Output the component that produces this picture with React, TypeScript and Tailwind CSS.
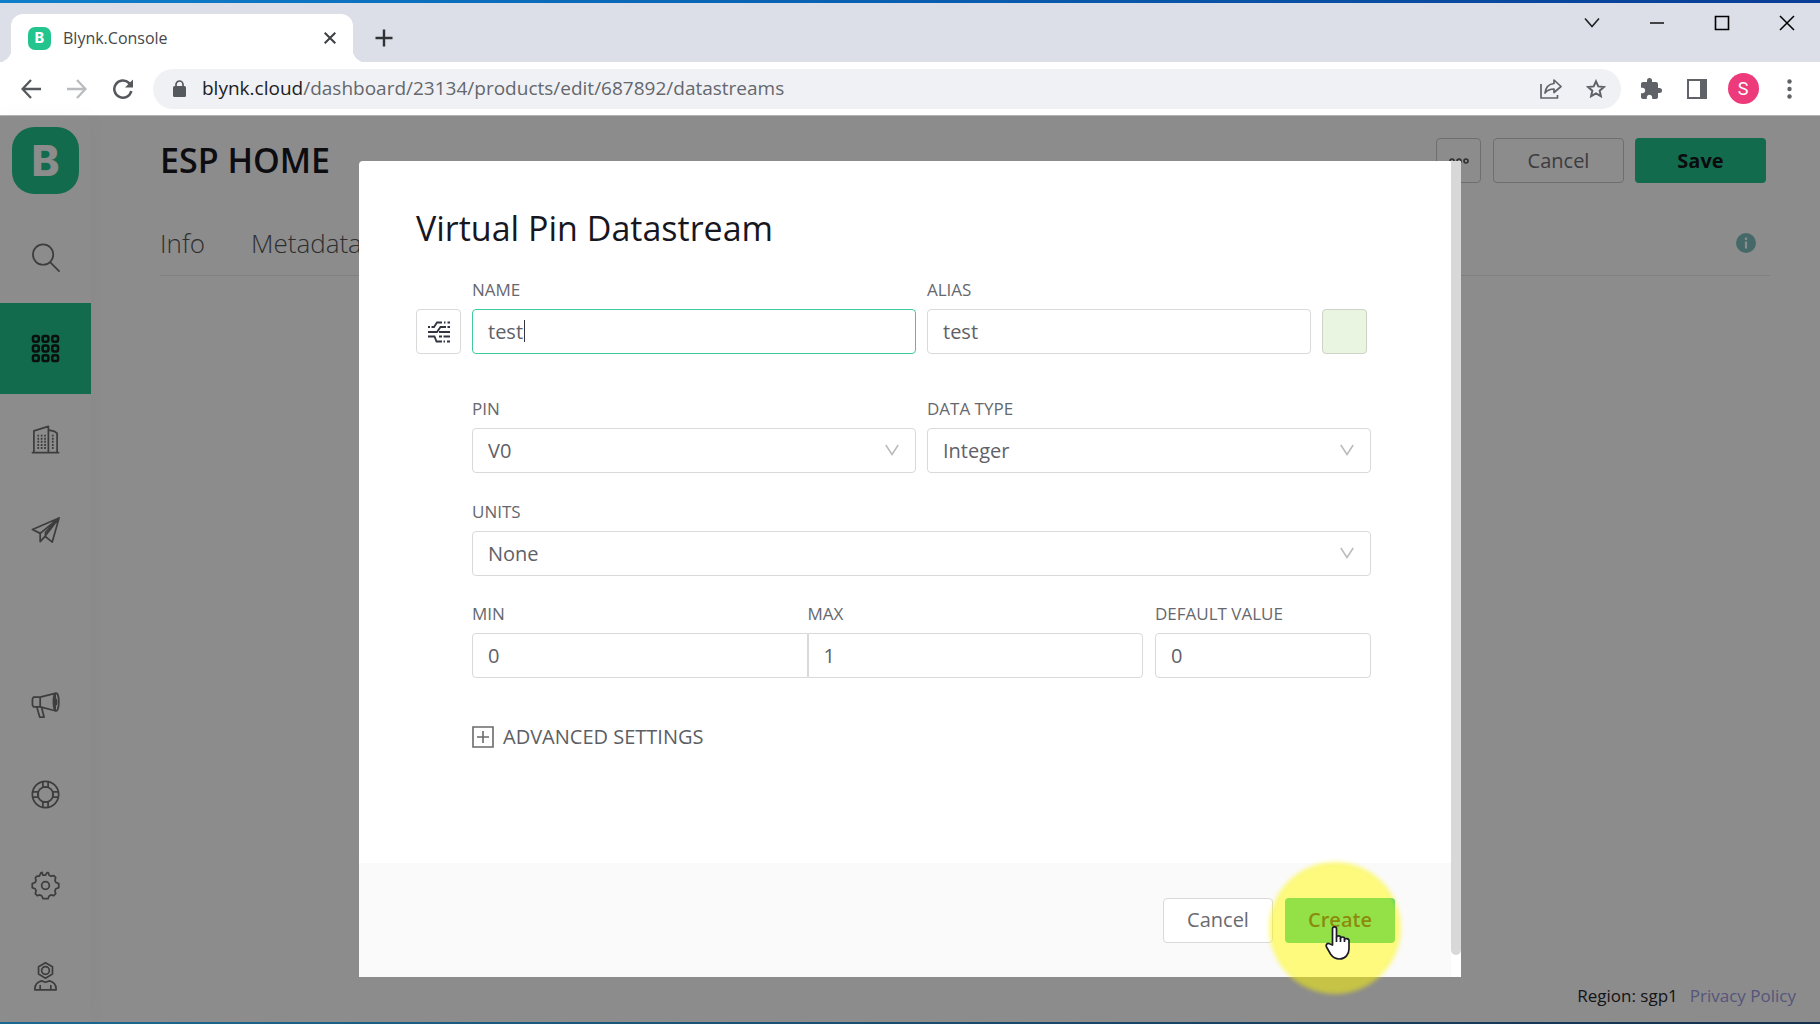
import type { ReactNode } from 'react';

const heading = 'font-["Open_Sans",sans-serif]';

function SideIcon({ children, className = 'text-[#707070]' }: { children: ReactNode; className?: string }) {
  return (
    <svg viewBox="0 0 30 30" className={`size-[29px] ${className}`} fill="none" stroke="currentColor" strokeWidth="1.8" strokeLinejoin="round" strokeLinecap="round" aria-hidden="true">
      {children}
    </svg>
  );
}

const searchIcon = (
  <SideIcon>
    <circle cx="12.5" cy="12" r="10.5" />
    <path d="M20 20l9 9" />
  </SideIcon>
);

const gridIcon = (
  <SideIcon className="text-[#141c1a]">
    {[5, 15, 25].map((y) =>
      [5, 15, 25].map((x) => <rect key={`${x}-${y}`} x={x - 3} y={y - 3} width="6" height="6" rx="2" strokeWidth="2.6" />),
    )}
  </SideIcon>
);

const buildingIcon = (
  <SideIcon>
    <path d="M1.5 28.5h27M3 28V6l15-4.500V28M18 5l6 1.500 3 2V28" />
    <path d="M7.500 10v15M11 10v15M14.500 10v15M22.500 10v15" strokeDasharray="2 1.200" strokeLinecap="butt" />
  </SideIcon>
);

const planeIcon = (
  <SideIcon>
    <path d="M29 2L1.500 14l8 4L29 2 22 27l-7.500-6M9.500 18v8.500l5-5.500L29 2l-14 15v4" strokeWidth="1.8" />
  </SideIcon>
);

const megaphoneIcon = (
  <SideIcon>
    <path d="M2.500 8.500h7L25 4.500v18l-15.500-4h-7l-1-2v-6zM9.500 8.500v10" />
    <ellipse cx="26" cy="13.500" rx="2.800" ry="9.200" />
    <ellipse cx="25.500" cy="13.500" rx="1" ry="3" />
    <path d="M6 18.500l3 10.500h4.500L11 19" />
  </SideIcon>
);

const ringIcon = (
  <SideIcon>
    <circle cx="15" cy="15" r="13.600" />
    <circle cx="15" cy="15" r="8" />
    <path d="M12.300 1.800V7.500h5.400V1.800M12.300 28.200v-5.700h5.400v5.700M1.800 12.300h5.700v5.400H1.800M28.200 12.300h-5.700v5.400h5.700" />
  </SideIcon>
);

const gearIcon = (
  <SideIcon>
    <path d="M12.2 4.300L11.500 1.500h0l-1.300.4-1.500 3.300-2.500.2-1.700 1.700.7 2.800-1 2-2.900 1.100v4.200l2.900 1.100 1 2-.7 3.200 1.900 1.900 3-.6 1.800 1 1.200 2.700h5.200l1.200-2.700 1.800-1 3 .6 1.900-1.900-.7-3.200 1-2 2.900-1.100v-4.200l-2.900-1.100-1-2 .7-3.200-1.900-1.900-3 .6-1.800-1-1-2.700h-1.300l-1.400 2.500z" />
    <circle cx="15" cy="15" r="4" />
  </SideIcon>
);

const userIcon = (
  <SideIcon>
    <path d="M15 .8l7.200 4.200v7.500L15 16.700l-7.200-4.200V5z" />
    <circle cx="15" cy="8.800" r="4" />
    <path d="M11 19.500L15 21l4-1.500c4 1 7 3.500 7 8.500v.8H4V28c0-5 3-7.500 7-8.500zM9.500 28v-3.500M20.500 28v-3.500" />
  </SideIcon>
);

function NavItem({ label, active, children }: { label: string; active?: boolean; children: ReactNode }) {
  return (
    <a href="#" aria-label={label} className={`flex h-[91px] items-center justify-center ${active ? 'bg-[#23c48e]' : ''}`}>
      {children}
    </a>
  );
}

function BrowserChrome() {
  const tool = 'flex items-center justify-center text-[#5f6368]';
  return (
    <header className='font-["Open_Sans",sans-serif]'>
      <div className="h-[3px] bg-linear-to-r from-[#0f7fc9] to-[#0a3d96]" />
      <div className="flex h-[59px] justify-between bg-[#dcdee8]">
        <div className="flex items-end">
          <div className="relative ml-[11px] flex h-12 w-[342px] items-center rounded-t-xl bg-white pr-[15px] pl-[17px] before:absolute before:bottom-0 before:-left-3 before:size-3 before:rounded-br-xl before:shadow-[4px_4px_0_white] after:absolute after:-right-3 after:bottom-0 after:size-3 after:rounded-bl-xl after:shadow-[-4px_4px_0_white]">
            <span className='flex size-[23px] items-center justify-center rounded-[7px] bg-[#23c48e] font-["Inter",sans-serif] text-sm leading-none font-extrabold text-white'>B</span>
            <span className="ml-3 flex-1 text-base text-[#45474a]">Blynk.Console</span>
            <button aria-label="Close tab" className="flex size-4 items-center justify-center">
              <svg viewBox="0 0 12 12" className="size-3" stroke="#3c4043" strokeWidth="2"><path d="M.7.7l10.600 10.600M11.300.7L.7 11.300" /></svg>
            </button>
          </div>
          <button aria-label="New tab" className="ml-[22px] flex h-12 w-[18px] items-center justify-center">
            <svg viewBox="0 0 18 18" className="size-[18px]" stroke="#303236" strokeWidth="2.400"><path d="M9 .5v17M.5 9h17" /></svg>
          </button>
        </div>
        <div className="flex h-10 items-center pr-px">
          <button aria-label="Search tabs" className="flex w-[65px] justify-center">
            <svg viewBox="0 0 16 16" className="size-4" fill="none" stroke="#202124" strokeWidth="1.600"><path d="M1 3.500l7 8 7-8" /></svg>
          </button>
          <button aria-label="Minimize" className="flex w-[65px] justify-center">
            <svg viewBox="0 0 16 16" className="size-4" stroke="#000" strokeWidth="1.400"><path d="M1 8h14" /></svg>
          </button>
          <button aria-label="Maximize" className="flex w-[65px] justify-center">
            <svg viewBox="0 0 16 16" className="size-4" fill="none" stroke="#000" strokeWidth="1.600"><path d="M1.500 1.500h13v13h-13z" /></svg>
          </button>
          <button aria-label="Close window" className="flex w-[65px] justify-center">
            <svg viewBox="0 0 16 16" className="size-4" stroke="#000" strokeWidth="1.500"><path d="M1 1l14 14M15 1L1 15" /></svg>
          </button>
        </div>
      </div>
      <div className="flex h-[54px] items-center border-b border-[#b4b4b4] bg-white pr-[8px] pl-2">
        <button aria-label="Back" className={`${tool} w-[46px]`}>
          <svg viewBox="0 0 20 20" className="size-5" fill="none" stroke="#55585c" strokeWidth="2.300"><path d="M20 10H1.500M10 1L1.500 10l8.500 9" /></svg>
        </button>
        <button aria-label="Forward" className={`${tool} w-[46px]`}>
          <svg viewBox="0 0 20 20" className="size-5" fill="none" stroke="#b9bbbe" strokeWidth="2.300"><path d="M0 10h18.500M10 1l8.500 9-8.500 9" /></svg>
        </button>
        <button aria-label="Reload" className={`${tool} w-[46px]`}>
          <svg viewBox="0 0 20 20" className="size-5" fill="none" stroke="#55585c" strokeWidth="2.500"><path d="M18.300 12A8.600 8.600 0 1 1 16 4l1 1" /><path d="M20 .5V8.500h-8z" fill="#55585c" stroke="none" /></svg>
        </button>
        <div className="mx-[7px] flex h-10 flex-1 items-center rounded-full bg-[#f0f1f5] pr-[14px] pl-5">
          <svg viewBox="0 0 13 17" className="h-[17px] w-[13px]" aria-hidden="true"><rect x="0" y="6" width="13" height="11" rx="1.500" fill="#55585c" /><path d="M3 7V4.500a3.500 3.500 0 0 1 7 0V7" fill="none" stroke="#55585c" strokeWidth="1.700" /></svg>
          <span className="ml-4 flex-1 text-[19px] text-[#64676c]"><span className="text-[#202124]">blynk.cloud</span>/dashboard/23134/products/edit/687892/datastreams</span>
          <button aria-label="Share" className={`${tool} mr-3 w-[45px]`}>
            <svg viewBox="0 0 22 20" className="h-5 w-[22px]" fill="none" stroke="currentColor" strokeWidth="1.700" strokeLinejoin="round"><path d="M1 5v14h16.500v-3" /><path d="M14 1l7 6.500-7 6V10c-4 0-6.500 1-9 4 .7-5.500 4-9 9-9.500z" /></svg>
          </button>
          <button aria-label="Bookmark" className={`${tool} w-[22px]`}>
            <svg viewBox="0 0 20 19" className="h-[19px] w-5" fill="none" stroke="currentColor" strokeWidth="2"><path d="M10 2.300l2.300 5.100 5.600.6-4.200 3.700 1.200 5.500-4.900-2.900-4.900 2.900 1.200-5.500L2.100 8l5.600-.6z" /></svg>
          </button>
        </div>
        <button aria-label="Extensions" className={`${tool} w-[46px]`}>
          <svg viewBox="1 1 22 22" className="size-[22px]" fill="currentColor"><path d="M20.500 11H19V7c0-1.100-.9-2-2-2h-4V3.500a2.500 2.500 0 0 0-5 0V5H4c-1.100 0-2 .9-2 2v3.800h1.500c1.500 0 2.700 1.200 2.700 2.700S5 16.200 3.500 16.200H2V20c0 1.100.9 2 2 2h3.800v-1.500c0-1.500 1.200-2.700 2.700-2.700s2.700 1.200 2.700 2.700V22H17c1.100 0 2-.9 2-2v-4h1.500a2.500 2.500 0 0 0 0-5z" /></svg>
        </button>
        <button aria-label="Side panel" className={`${tool} w-[46px]`}>
          <svg viewBox="0 0 20 20" className="size-5" fill="none" stroke="currentColor" strokeWidth="2"><path d="M1 1h18v18H1z" /><path d="M14 1h5v18h-5z" fill="currentColor" /></svg>
        </button>
        <button aria-label="Profile" className={`${tool} w-[46px]`}>
          <span className='flex size-[31px] items-center justify-center rounded-full bg-[#ec3a7b] font-["Roboto",sans-serif] text-lg leading-none text-white'>S</span>
        </button>
        <button aria-label="Menu" className={`${tool} w-[46px]`}>
          <svg viewBox="0 0 5 20" className="h-5 w-[5px]" fill="currentColor"><circle cx="2.500" cy="2.500" r="2.200" /><circle cx="2.500" cy="10" r="2.200" /><circle cx="2.500" cy="17.500" r="2.200" /></svg>
        </button>
      </div>
    </header>
  );
}

function Field({ id, label, className = '', children }: { id: string; label: string; className?: string; children: ReactNode }) {
  return (
    <div className={`flex min-w-0 flex-col gap-[7px] ${className}`}>
      <label htmlFor={id} className="text-[17px] leading-6 text-[#66686e]">{label}</label>
      {children}
    </div>
  );
}

const box = 'h-[45px] w-full min-w-0 border border-[#d9d9d9] bg-white px-[15px] text-xl text-[#5f6168] outline-none';

function Select({ id, value }: { id: string; value: string }) {
  return (
    <div className="relative">
      <select id={id} className={`${box} appearance-none rounded`}>
        <option>{value}</option>
      </select>
      <svg viewBox="0 0 14 12" className="pointer-events-none absolute top-4 right-[17px] h-3 w-[14px]" fill="none" stroke="#bcbcbc" strokeWidth="1.600" aria-hidden="true"><path d="M.8 1L7 10.500 13.200 1" /></svg>
    </div>
  );
}

function DatastreamModal() {
  return (
    <section role="dialog" aria-label="Virtual Pin Datastream" className="flex w-full max-w-[1102px] rounded-t bg-white">
      <form className="flex min-w-0 flex-1 flex-col">
        <div className="flex-1 pt-[43px] pr-20 pl-[57px]">
          <h2 className={`${heading} text-[34px] leading-[48px] text-[#17171f]`}>Virtual Pin Datastream</h2>
          <div className="mt-[26px] flex items-end gap-[11px]">
            <button type="button" aria-label="Choose icon" className="flex size-[45px] shrink-0 items-center justify-center rounded border border-[#d9d9d9]">
              <svg viewBox="0 0 22 22" className="size-[22px]" fill="none" stroke="#33343f" strokeWidth="1.800" aria-hidden="true">
                <path d="M0 6h2M3.500 6h2.500l3-4.500h5M16 1.500h1.500M19.500 1.500H22M0 11h9l3.500-5H18M19.500 6H22M11 11h11M0 15.500h6.500l2 5H14M11 15.500h3M15.500 15.500H22M15.500 20.500h1.500M19 20.500h3" />
              </svg>
            </button>
            <div className="grid flex-1 grid-cols-2 gap-[11px]">
              <Field id="name" label="NAME">
                <div className="relative">
                  <input id="name" defaultValue="test" className="h-[45px] w-full rounded border border-[#3fcb9c] bg-white px-[15px] text-xl text-[#5f6168] outline-none" />
                  <span className="absolute top-[11px] left-[52px] h-[22px] w-px bg-[#33343f]" />
                </div>
              </Field>
              <div className="flex min-w-0 items-end gap-[11px] pr-1">
                <Field id="alias" label="ALIAS" className="flex-1">
                  <input id="alias" defaultValue="test" className={`${box} rounded`} />
                </Field>
                <button type="button" aria-label="Choose color" className="size-[45px] rounded border border-[#cdd3c7] bg-[#e9f5e1]" />
              </div>
            </div>
          </div>
          <div className="pl-14">
            <div className="mt-[43px] grid grid-cols-2 gap-[11px]">
              <Field id="pin" label="PIN"><Select id="pin" value="V0" /></Field>
              <Field id="type" label="DATA TYPE"><Select id="type" value="Integer" /></Field>
            </div>
            <Field id="units" label="UNITS" className="mt-[27px]"><Select id="units" value="None" /></Field>
            <div className="mt-[26px] flex">
              <Field id="min" label="MIN" className="flex-1"><input id="min" defaultValue="0" className={`${box} rounded-l`} /></Field>
              <Field id="max" label="MAX" className="flex-1"><input id="max" defaultValue="1" className={`${box} rounded-r`} /></Field>
              <Field id="default" label="DEFAULT VALUE" className="ml-3 w-[216px]"><input id="default" defaultValue="0" className={`${box} rounded`} /></Field>
            </div>
            <button type="button" className="mt-[44px] flex items-center gap-[9px] text-xl leading-[30px] text-[#5c5e64]">
              <svg viewBox="0 0 22 22" className="size-[22px]" fill="none" stroke="#6a6a6a" strokeWidth="1.600" aria-hidden="true"><path d="M1 1h20v20H1zM5 11h12M11 5v12" /></svg>
              ADVANCED SETTINGS
            </button>
          </div>
        </div>
        <div className={`flex h-[114px] items-center justify-end gap-3 bg-[#fafafa] pr-14 text-xl ${heading}`}>
          <button type="button" className="h-[45px] w-[110px] rounded border border-[#d9d9d9] bg-white font-medium text-[#6a6a70]">Cancel</button>
          <div className="relative">
            <button type="button" className="h-[45px] w-[110px] rounded bg-[#29c68e] font-semibold text-[#17191c]">Create</button>
            <span className="pointer-events-none absolute -top-9 -left-4 size-[132px] rounded-full bg-[#fffa00]/50 blur-[2px]" />
            <svg viewBox="0 0 27 34" className="pointer-events-none absolute top-7 left-10 h-[34px] w-[27px]" fill="#fff" stroke="#1d1d28" strokeWidth="1.700" strokeLinejoin="round" aria-hidden="true">
              <path d="M7.500 19V3c0-2.800 4-2.800 4 0v8c0-1.600 4-1.600 4 0v1.200c0-1.600 4-1.600 4 0v1.500c0-1.600 4.500-1.600 4.500 1V23c0 5-3.500 10-9.500 10C10 33 7.500 31 5.500 28L1.500 21c-1-2.200.8-4.500 3-3.300z" />
              <path d="M11.500 11v5M15.500 12v4M19.500 13.500V16" />
            </svg>
          </div>
        </div>
      </form>
      <div className="w-[10px] pb-[22px]">
        <div className="h-full rounded-b-full bg-[#d8d8d8]" />
      </div>
    </section>
  );
}

export default function App() {
  return (
    <div className='flex min-h-screen flex-col bg-white font-["Open_Sans","Noto_Sans",sans-serif]'>
      <BrowserChrome />
      <div className="relative flex flex-1">
        <nav className="flex w-[91px] flex-col justify-between shadow-[0_0_20px_rgba(0,0,0,0.03)]">
          <div>
            <a href="#" aria-label="Blynk" className='mx-auto mt-[11px] mb-[18px] flex size-[67px] items-center justify-center rounded-[22px] bg-[#23c48e] font-["Inter",sans-serif] text-[42px] leading-none font-extrabold text-white'>B</a>
            <NavItem label="Search">{searchIcon}</NavItem>
            <NavItem label="Templates" active>{gridIcon}</NavItem>
            <NavItem label="Organizations">{buildingIcon}</NavItem>
            <NavItem label="Messages">{planeIcon}</NavItem>
          </div>
          <div>
            <NavItem label="Announcements">{megaphoneIcon}</NavItem>
            <NavItem label="Help">{ringIcon}</NavItem>
            <NavItem label="Settings">{gearIcon}</NavItem>
            <NavItem label="Account">{userIcon}</NavItem>
          </div>
        </nav>
        <main className="flex flex-1 flex-col">
          <div className={`mt-[22px] flex items-center pr-[54px] pl-[69px] text-xl ${heading}`}>
            <h1 className="flex-1 text-[34px] leading-[45px] font-semibold text-[#17171f]">ESP HOME</h1>
            <button aria-label="More" className="flex size-[45px] items-center justify-center rounded border border-[#c8c8c8]">
              <svg viewBox="0 0 20 6" className="h-[6px] w-5" fill="none" stroke="#555" strokeWidth="1.600"><circle cx="3" cy="3" r="2" /><circle cx="10" cy="3" r="2" /><circle cx="17" cy="3" r="2" /></svg>
            </button>
            <button className="ml-3 h-[45px] w-[131px] rounded border border-[#c8c8c8] font-medium text-[#6e6e74]">Cancel</button>
            <button className="ml-[11px] h-[45px] w-[131px] rounded bg-[#23c48e] font-bold text-[#15151b]">Save</button>
          </div>
          <div className="mr-[50px] ml-[69px] flex h-[93px] items-center border-b border-[#eaeaea] pt-7 text-[26px] font-light text-[#55555a]">
            <a href="#">Info</a>
            <a href="#" className="ml-[46px] flex-1">Metadata</a>
            <svg viewBox="0 0 20 20" className="mr-[14px] size-5" role="img" aria-label="Information"><circle cx="10" cy="10" r="10" fill="#7cc0bd" /><path d="M10 4.500v2.500M10 8.500v7" stroke="#fff" strokeWidth="2.200" /></svg>
          </div>
          <footer className='mt-auto flex justify-end gap-3 pr-6 pb-[14px] font-["Open_Sans",sans-serif] text-[17px] leading-6 text-[#26262c]'>
            <span>Region: sgp1</span>
            <a href="#" className="text-[#9c9ce0]">Privacy Policy</a>
          </footer>
        </main>
        <div className="absolute inset-0 flex justify-center bg-black/45 py-[45px]">
          <DatastreamModal />
        </div>
      </div>
      <div className="h-[2px] bg-linear-to-r from-[#1c6a92] to-[#14304e]" />
    </div>
  );
}
